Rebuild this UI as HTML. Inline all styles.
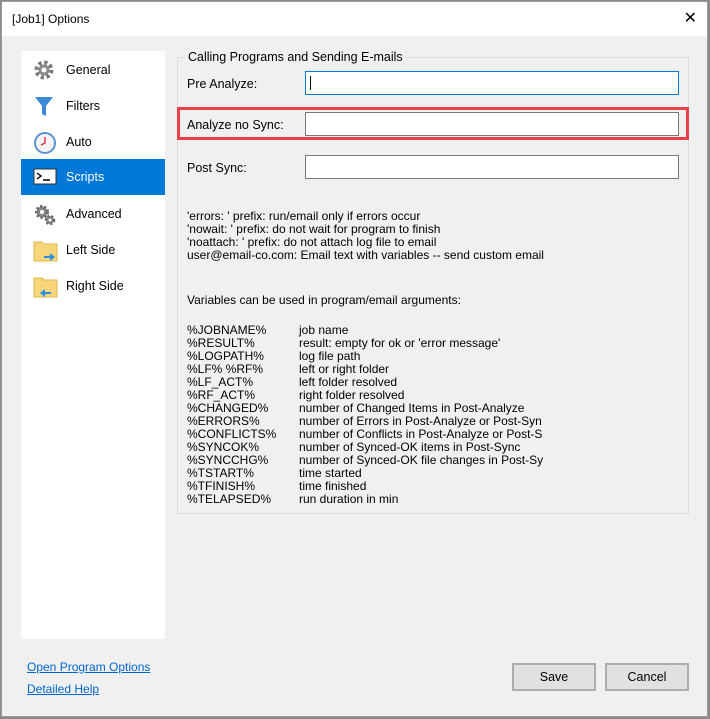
<!DOCTYPE html>
<html><head><style>
*{margin:0;padding:0;box-sizing:border-box}
body{width:710px;height:719px;background:#8a8a8a;font-family:"Liberation Sans",sans-serif;font-size:12px;color:#000;position:relative;overflow:hidden}
.win{position:absolute;left:1px;top:1px;width:707px;height:716px;background:#f0f0f0;border:1px solid #9a9a9a}
.title{position:absolute;left:0;top:0;width:100%;height:34px;background:#fff}
.title span{position:absolute;left:10px;top:10px;font-size:12px}
.x{position:absolute;right:10px;top:6px;font-size:16px}
.abs{position:absolute}
.side{position:absolute;left:21px;top:51px;width:144px;height:588px;background:#fff}
.item{position:absolute;left:0;width:144px;height:36px}
.item span{position:absolute;left:45px;top:11px;font-size:12.5px}
.item svg{position:absolute;left:12px;top:7px}
.sel{background:#0078d7;color:#fff}
.group{position:absolute;left:177px;top:57px;width:512px;height:457px;border:1px solid #dcdcdc}
.legend{position:absolute;left:186px;top:50px;background:#f0f0f0;padding:0 2px;font-size:12.5px}
.inp{position:absolute;left:305px;width:374px;height:24px;background:#fff;border:1px solid #7a7a7a}
.lbl{position:absolute;left:187px;font-size:12.5px}
.t{position:absolute;left:187px;font-size:12px;line-height:13px;white-space:pre}
.c2{position:absolute;left:299px;font-size:12px;line-height:13px;white-space:pre}
a{color:#0066cc;text-decoration:underline;position:absolute;left:27px;font-size:12px}
.btn{position:absolute;top:663px;width:84px;height:28px;background:#e1e1e1;border:2px solid #adadad;text-align:center;line-height:24px;font-size:12.5px}
</style></head><body>
<div class="win">
<div class="title"><span>[Job1] Options</span><div class="x">✕</div></div>
</div>
<div class="side">
 <div class="item" style="top:1px"><svg width="22" height="22" viewBox="0 0 22 22"><circle cx="11" cy="11" r="7" fill="none" stroke="#7a7a7a" stroke-width="5" stroke-dasharray="3 2.5"/><circle cx="11" cy="11" r="5.5" fill="#8c8c8c"/><circle cx="11" cy="11" r="2.5" fill="#fff"/></svg><span>General</span></div>
 <div class="item" style="top:37px"><svg width="22" height="24" viewBox="0 0 22 24"><path d="M2 2H20L13 11V21L9 19V11Z" fill="#3c8ad6"/></svg><span>Filters</span></div>
 <div class="item" style="top:73px"><svg width="24" height="24" viewBox="0 0 24 24"><circle cx="12" cy="12" r="10" fill="#f4f4f4" stroke="#5b93d3" stroke-width="2"/><path d="M12 6V12L8 14" stroke="#d23" stroke-width="1.3" fill="none"/></svg><span>Auto</span></div>
 <div class="item sel" style="top:108px"><svg width="24" height="22" viewBox="0 0 24 22"><rect x="1" y="3" width="22" height="15" fill="#fff" stroke="#333"/><path d="M4 7L8 10L4 13M10 14H17" stroke="#000" stroke-width="1.4" fill="none"/></svg><span>Scripts</span></div>
 <div class="item" style="top:145px"><svg width="24" height="24" viewBox="0 0 24 24"><circle cx="9" cy="9" r="5.5" fill="#888" stroke="#666" stroke-width="3" stroke-dasharray="2 2"/><circle cx="9" cy="9" r="2" fill="#fff"/><circle cx="17" cy="17" r="4" fill="#888" stroke="#666" stroke-width="2.5" stroke-dasharray="2 2"/><circle cx="17" cy="17" r="1.5" fill="#fff"/></svg><span>Advanced</span></div>
 <div class="item" style="top:181px"><svg width="26" height="26" viewBox="0 0 26 26"><path d="M1 3H9L11 5H24V22H1Z" fill="#f7d67a" stroke="#e0b94a"/><path d="M11 17H17V14L22 18L17 22V19H11Z" fill="#2d8ee8"/></svg><span>Left Side</span></div>
 <div class="item" style="top:217px"><svg width="26" height="26" viewBox="0 0 26 26"><path d="M1 3H9L11 5H24V22H1Z" fill="#f7d67a" stroke="#e0b94a"/><path d="M18 17H12V14L7 18L12 22V19H18Z" fill="#2d8ee8"/></svg><span>Right Side</span></div>
</div>
<div class="group"></div>
<div class="legend">Calling Programs and Sending E-mails</div>
<div class="lbl" style="top:77px">Pre Analyze:</div>
<div class="inp" style="top:71px;border-color:#0078d7"><div style="position:absolute;left:4px;top:4px;width:1px;height:14px;background:#000"></div></div>
<div class="abs" style="left:177px;top:107px;width:512px;height:33px;border:3px solid #e8414a"></div>
<div class="lbl" style="top:118px">Analyze no Sync:</div>
<div class="inp" style="top:112px"></div>
<div class="lbl" style="top:161px">Post Sync:</div>
<div class="inp" style="top:155px"></div>
<div class="t" style="top:210px">'errors: ' prefix: run/email only if errors occur
'nowait: ' prefix: do not wait for program to finish
'noattach: ' prefix: do not attach log file to email
user@email-co.com: Email text with variables -- send custom email</div>
<div class="t" style="top:294px">Variables can be used in program/email arguments:</div>
<div class="t" style="top:324px">%JOBNAME%
%RESULT%
%LOGPATH%
%LF% %RF%
%LF_ACT%
%RF_ACT%
%CHANGED%
%ERRORS%
%CONFLICTS%
%SYNCOK%
%SYNCCHG%
%TSTART%
%TFINISH%
%TELAPSED%</div>
<div class="c2" style="top:324px">job name
result: empty for ok or 'error message'
log file path
left or right folder
left folder resolved
right folder resolved
number of Changed Items in Post-Analyze
number of Errors in Post-Analyze or Post-Syn
number of Conflicts in Post-Analyze or Post-S
number of Synced-OK items in Post-Sync
number of Synced-OK file changes in Post-Sy
time started
time finished
run duration in min</div>
<a style="top:660px">Open Program Options</a>
<a style="top:682px">Detailed Help</a>
<div class="btn" style="left:512px">Save</div>
<div class="btn" style="left:605px">Cancel</div>
</body></html>
